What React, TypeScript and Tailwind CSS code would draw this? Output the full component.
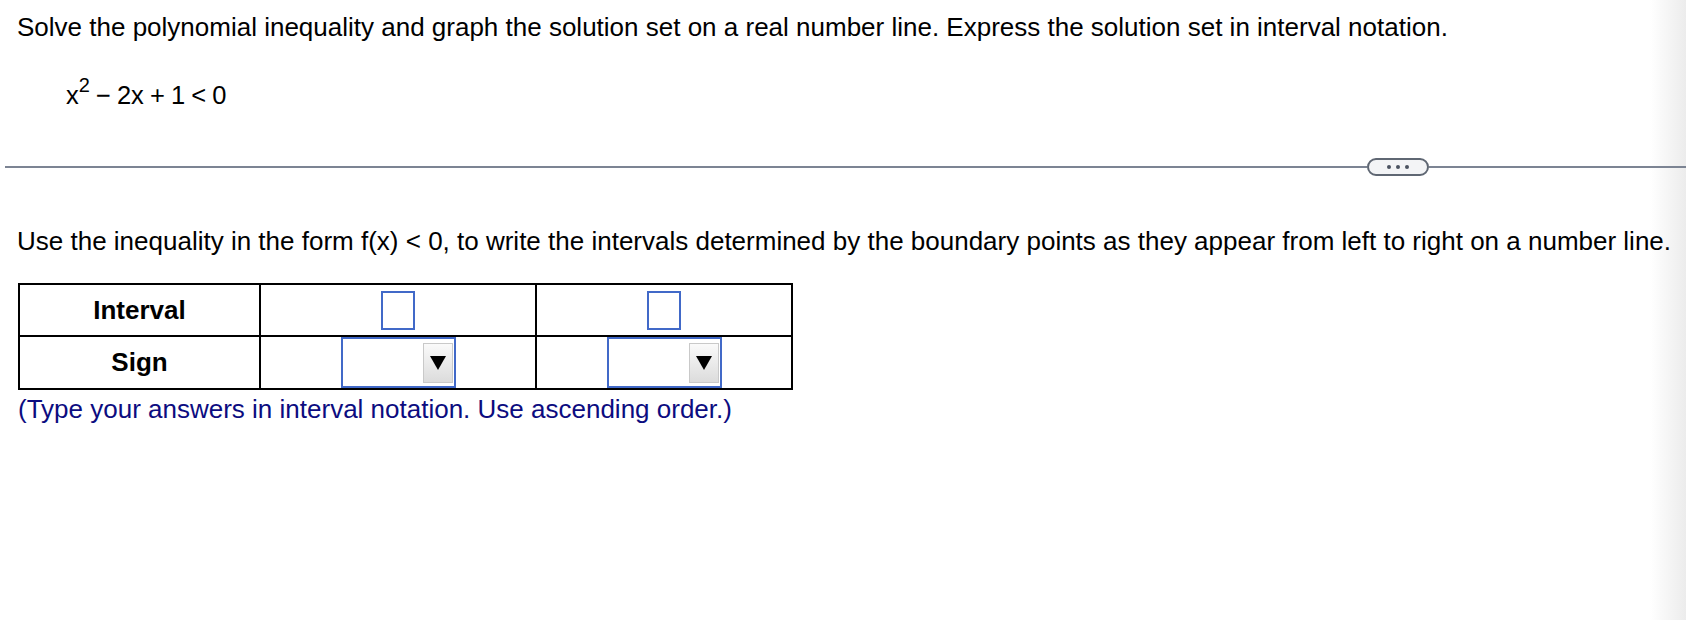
import React from 'react';

const SelectBox: React.FC = () => (
  <div className="w-[115px] h-[51px] border-2 border-[#4169c8] bg-white flex items-center justify-end pr-[1px]">
    <div className="w-[30px] h-[40px] border border-[#c9c9c9] bg-gradient-to-b from-[#fafafa] to-[#dcdcdc] flex items-center justify-center">
      <svg width="18" height="16" viewBox="0 0 18 16">
        <polygon points="1,1 17,1 9,15" fill="#000" />
      </svg>
    </div>
  </div>
);

const InputBox: React.FC = () => (
  <div className="w-[34px] h-[39px] border-2 border-[#4169c8] bg-white" />
);

export default function App() {
  return (
    <div className="relative w-[1686px] h-[620px] bg-white overflow-hidden font-['Liberation_Sans',Arial,sans-serif] text-black">
      {/* scroll shadow at right edge, behind content */}
      <div className="absolute top-0 right-0 w-[36px] h-full bg-gradient-to-r from-white/0 to-[#ececec]" />

      <div className="relative">
        <div className="pl-[17px] pt-[12px] text-[26px] leading-[30px]">
          Solve the polynomial inequality and graph the solution set on a real number line. Express the solution set in interval notation.
        </div>

        <div className="pl-[66px] mt-[38px] text-[25.5px] leading-[30px] [word-spacing:-1px]">
          x<span className="relative -top-[12px] text-[20px] leading-none">2</span> − 2x + 1 &lt; 0
        </div>

        <div className="mt-[48px] ml-[5px] flex items-center">
          <div className="flex-1 h-[2px] bg-[#7c8493]" />
          <div className="w-[62px] h-[18px] rounded-full border-2 border-[#5f6773] bg-[#f3f4f6] flex items-center justify-center gap-[5px]">
            <span className="w-[4px] h-[4px] rounded-full bg-[#4b5260]" />
            <span className="w-[4px] h-[4px] rounded-full bg-[#4b5260]" />
            <span className="w-[4px] h-[4px] rounded-full bg-[#4b5260]" />
          </div>
          <div className="w-[257px] h-[2px] bg-[#7c8493]" />
        </div>

        <div className="pl-[17px] mt-[50px] text-[26px] leading-[30px]">
          Use the inequality in the form f(x) &lt; 0, to write the intervals determined by the boundary points as they appear from left to right on a number line.
        </div>

        <div className="ml-[18px] mt-[27px] w-[775px] border-2 border-black bg-white">
          <div className="grid grid-cols-[241px_276px_1fr] h-[52px] border-b-2 border-black">
            <div className="flex items-center justify-center font-bold text-[26px] border-r-2 border-black">Interval</div>
            <div className="flex items-center justify-center border-r-2 border-black"><InputBox /></div>
            <div className="flex items-center justify-center"><InputBox /></div>
          </div>
          <div className="grid grid-cols-[241px_276px_1fr] h-[51px]">
            <div className="flex items-center justify-center font-bold text-[26px] border-r-2 border-black">Sign</div>
            <div className="flex items-center justify-center border-r-2 border-black"><SelectBox /></div>
            <div className="flex items-center justify-center"><SelectBox /></div>
          </div>
        </div>

        <div className="pl-[18px] mt-[4px] text-[26px] leading-[30px] text-[#0c0c80]">
          (Type your answers in interval notation. Use ascending order.)
        </div>
      </div>
    </div>
  );
}
